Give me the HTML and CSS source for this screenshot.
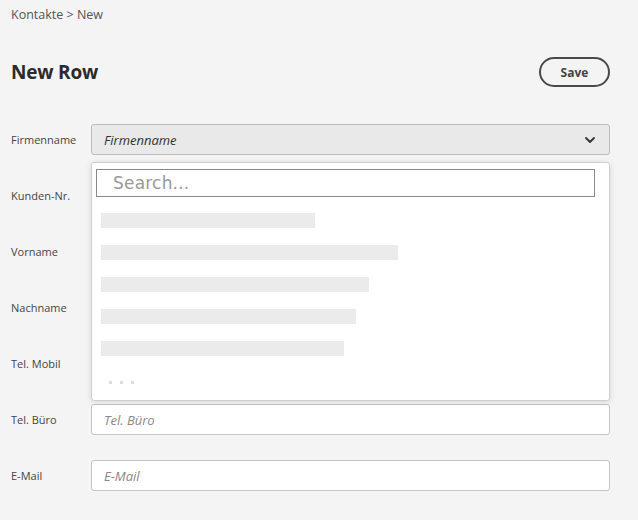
FILE: index.html
```html
<!DOCTYPE html>
<html lang="de">
<head>
<meta charset="utf-8">
<title>New Row</title>
<link rel="stylesheet" href="styles.css">
</head>
<body>
<div class="page">
  <div class="breadcrumb">Kontakte &gt; New</div>
  <div class="header">
    <h1 class="title">New Row</h1>
    <button class="save">Save</button>
  </div>
  <form class="form">
    <div class="row">
      <label class="label">Firmenname</label>
      <div class="field-wrap">
        <div class="select">
          <span class="ph">Firmenname</span>
          <svg class="chev" width="10" height="6" viewBox="0 0 10 6"><path d="M1 1l4 4 4-4" fill="none" stroke="#333" stroke-width="1.8" stroke-linecap="round" stroke-linejoin="round"/></svg>
        </div>
        <div class="dropdown">
          <div class="search"><span class="search-ph">Search...</span></div>
          <div class="skel" style="width:214px"></div>
          <div class="skel" style="width:297px"></div>
          <div class="skel" style="width:268px"></div>
          <div class="skel" style="width:255px"></div>
          <div class="skel" style="width:243px"></div>
          <div class="dots"><i></i><i></i><i></i></div>
        </div>
      </div>
    </div>
    <div class="row"><label class="label">Kunden-Nr.</label><div class="input"></div></div>
    <div class="row"><label class="label">Vorname</label><div class="input"></div></div>
    <div class="row"><label class="label">Nachname</label><div class="input"></div></div>
    <div class="row"><label class="label">Tel. Mobil</label><div class="input"></div></div>
    <div class="row"><label class="label">Tel. Büro</label><div class="input"><span class="ph">Tel. Büro</span></div></div>
    <div class="row"><label class="label">E-Mail</label><div class="input"><span class="ph">E-Mail</span></div></div>
  </form>
</div>
</body>
</html>
```
FILE: styles.css
```css
* { box-sizing: border-box; }
html, body { margin: 0; padding: 0; }
body {
  background: #f4f4f4;
  font-family: "Open Sans", "Liberation Sans", sans-serif;
  color: #333;
  width: 638px;
  height: 520px;
  overflow: hidden;
}
.page { padding: 6px 28px 0 11px; }
.breadcrumb {
  font-size: 12.5px;
  color: #555;
  line-height: 18px;
}
.header {
  display: flex;
  align-items: center;
  justify-content: space-between;
  margin-top: 33px;
  height: 30px;
}
.title {
  margin: 0;
  font-size: 19px;
  font-weight: 700;
  color: #2b2b2b;
  letter-spacing: -0.2px;
}
.save {
  width: 71px;
  height: 30px;
  border: 2px solid #4a4a4a;
  border-radius: 15px;
  background: transparent;
  font-family: inherit;
  font-size: 12px;
  font-weight: 700;
  color: #444;
  margin-right: 0;
}
.form {
  margin-top: 37px;
  display: flex;
  flex-direction: column;
  gap: 25px;
}
.row {
  display: flex;
  align-items: flex-start;
  height: 31px;
}
.label {
  width: 80px;
  font-size: 11px;
  color: #444;
  line-height: 31px;
  flex: none;
}
.field-wrap {
  position: relative;
  flex: 1;
  height: 31px;
}
.select, .input {
  flex: 1;
  height: 31px;
  border: 1px solid #c4c4c4;
  border-radius: 3px;
  background: #fff;
  display: flex;
  align-items: center;
  padding: 0 12px;
}
.select {
  background: #e9e9e9;
  border-color: #bdbdbd;
  justify-content: space-between;
  padding-right: 14px;
}
.ph {
  font-style: italic;
  font-size: 13px;
  color: #888;
}
.select .ph { color: #333; }
.dropdown {
  position: absolute;
  left: 0;
  right: 0;
  top: 38px;
  height: 239px;
  background: #fff;
  border: 1px solid #cfcfcf;
  border-radius: 3px;
  box-shadow: 0 1px 6px rgba(0,0,0,0.12);
  padding: 6px 14px 0 4px;
  z-index: 2;
}
.search {
  height: 28px;
  border: 1px solid #8a8a8a;
  padding-left: 16px;
  display: flex;
  align-items: center;
  margin-bottom: 16px;
}
.search-ph {
  font-family: "DejaVu Sans", sans-serif;
  font-size: 17px;
  color: #999;
  letter-spacing: 0.2px;
}
.skel {
  height: 15px;
  background: #ebebeb;
  margin-left: 5px;
  margin-bottom: 17px;
}
.dots {
  display: flex;
  gap: 8px;
  margin-left: 13px;
  margin-top: 25px;
}
.dots i {
  width: 3px;
  height: 3px;
  background: #dcdcdc;
  display: block;
}
```
